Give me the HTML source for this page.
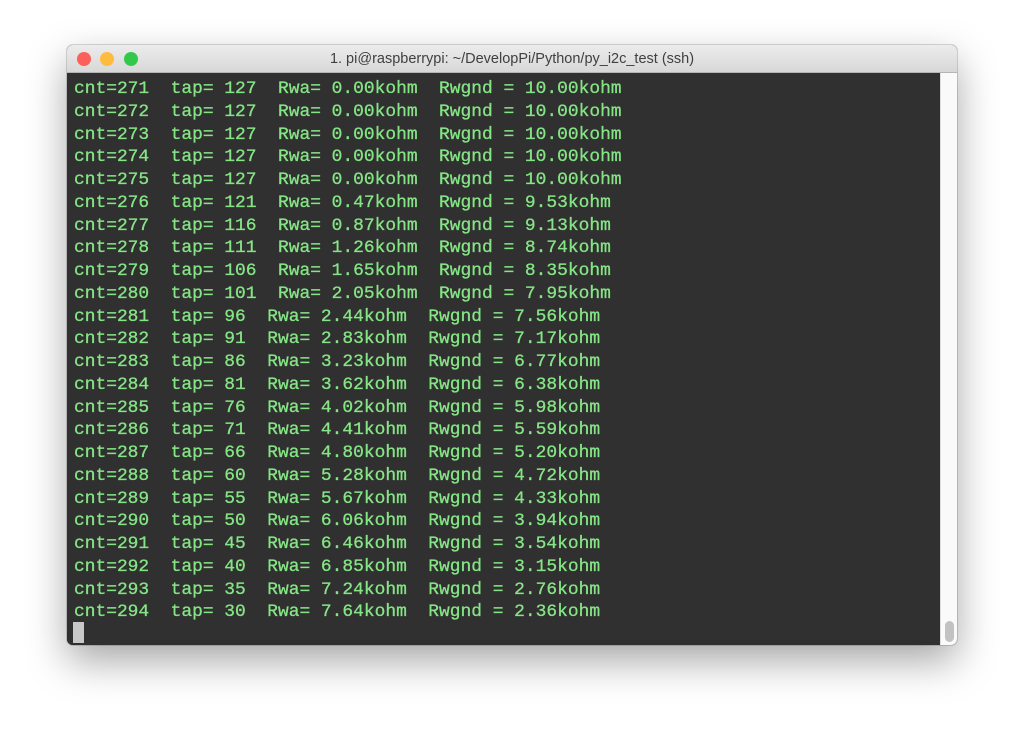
<!DOCTYPE html>
<html><head><style>
html,body{margin:0;padding:0;width:1024px;height:734px;background:#fff;overflow:hidden}
.win{position:absolute;left:67px;top:45px;width:890px;height:600px;border-radius:6px;box-shadow:0 16px 40px rgba(0,0,0,.35),0 0 0 1px rgba(0,0,0,.15);overflow:hidden;background:#303030}
.title{position:absolute;left:0;top:0;width:890px;height:27px;background:linear-gradient(#ececec,#d8d8d8);border-bottom:1px solid #b5b5b5;font:14.5px "Liberation Sans",sans-serif;color:#404040;text-align:center;line-height:29px}
.dot{position:absolute;top:7px;width:14px;height:14px;border-radius:50%}
.term{position:absolute;left:0;top:28px;width:873px;height:572px;background:#303030}
.sb{position:absolute;left:873px;top:28px;width:17px;height:572px;background:#fafafa;border-left:1px solid #ddd}
.thumb{position:absolute;left:4px;top:548px;width:9px;height:21px;border-radius:5px;background:#c2c2c2}
pre{position:absolute;left:7px;top:5px;margin:0;font:17.9px/22.75px "Liberation Mono",monospace;color:#85e585;-webkit-text-stroke:0.3px #85e585}
.cur{position:absolute;left:6px;top:549px;width:11px;height:21px;background:#c8c8c8}
</style></head><body>
<div class="win">
<div class="title">1. pi@raspberrypi: ~/DevelopPi/Python/py_i2c_test (ssh)
<div class="dot" style="left:10px;background:#fc605b"></div>
<div class="dot" style="left:33px;background:#fdbc40"></div>
<div class="dot" style="left:57px;background:#34c84a"></div>
</div>
<div class="term"><pre>cnt=271  tap= 127  Rwa= 0.00kohm  Rwgnd = 10.00kohm
cnt=272  tap= 127  Rwa= 0.00kohm  Rwgnd = 10.00kohm
cnt=273  tap= 127  Rwa= 0.00kohm  Rwgnd = 10.00kohm
cnt=274  tap= 127  Rwa= 0.00kohm  Rwgnd = 10.00kohm
cnt=275  tap= 127  Rwa= 0.00kohm  Rwgnd = 10.00kohm
cnt=276  tap= 121  Rwa= 0.47kohm  Rwgnd = 9.53kohm
cnt=277  tap= 116  Rwa= 0.87kohm  Rwgnd = 9.13kohm
cnt=278  tap= 111  Rwa= 1.26kohm  Rwgnd = 8.74kohm
cnt=279  tap= 106  Rwa= 1.65kohm  Rwgnd = 8.35kohm
cnt=280  tap= 101  Rwa= 2.05kohm  Rwgnd = 7.95kohm
cnt=281  tap= 96  Rwa= 2.44kohm  Rwgnd = 7.56kohm
cnt=282  tap= 91  Rwa= 2.83kohm  Rwgnd = 7.17kohm
cnt=283  tap= 86  Rwa= 3.23kohm  Rwgnd = 6.77kohm
cnt=284  tap= 81  Rwa= 3.62kohm  Rwgnd = 6.38kohm
cnt=285  tap= 76  Rwa= 4.02kohm  Rwgnd = 5.98kohm
cnt=286  tap= 71  Rwa= 4.41kohm  Rwgnd = 5.59kohm
cnt=287  tap= 66  Rwa= 4.80kohm  Rwgnd = 5.20kohm
cnt=288  tap= 60  Rwa= 5.28kohm  Rwgnd = 4.72kohm
cnt=289  tap= 55  Rwa= 5.67kohm  Rwgnd = 4.33kohm
cnt=290  tap= 50  Rwa= 6.06kohm  Rwgnd = 3.94kohm
cnt=291  tap= 45  Rwa= 6.46kohm  Rwgnd = 3.54kohm
cnt=292  tap= 40  Rwa= 6.85kohm  Rwgnd = 3.15kohm
cnt=293  tap= 35  Rwa= 7.24kohm  Rwgnd = 2.76kohm
cnt=294  tap= 30  Rwa= 7.64kohm  Rwgnd = 2.36kohm</pre><div class="cur"></div></div>
<div class="sb"><div class="thumb"></div></div>
</div>
</body></html>
